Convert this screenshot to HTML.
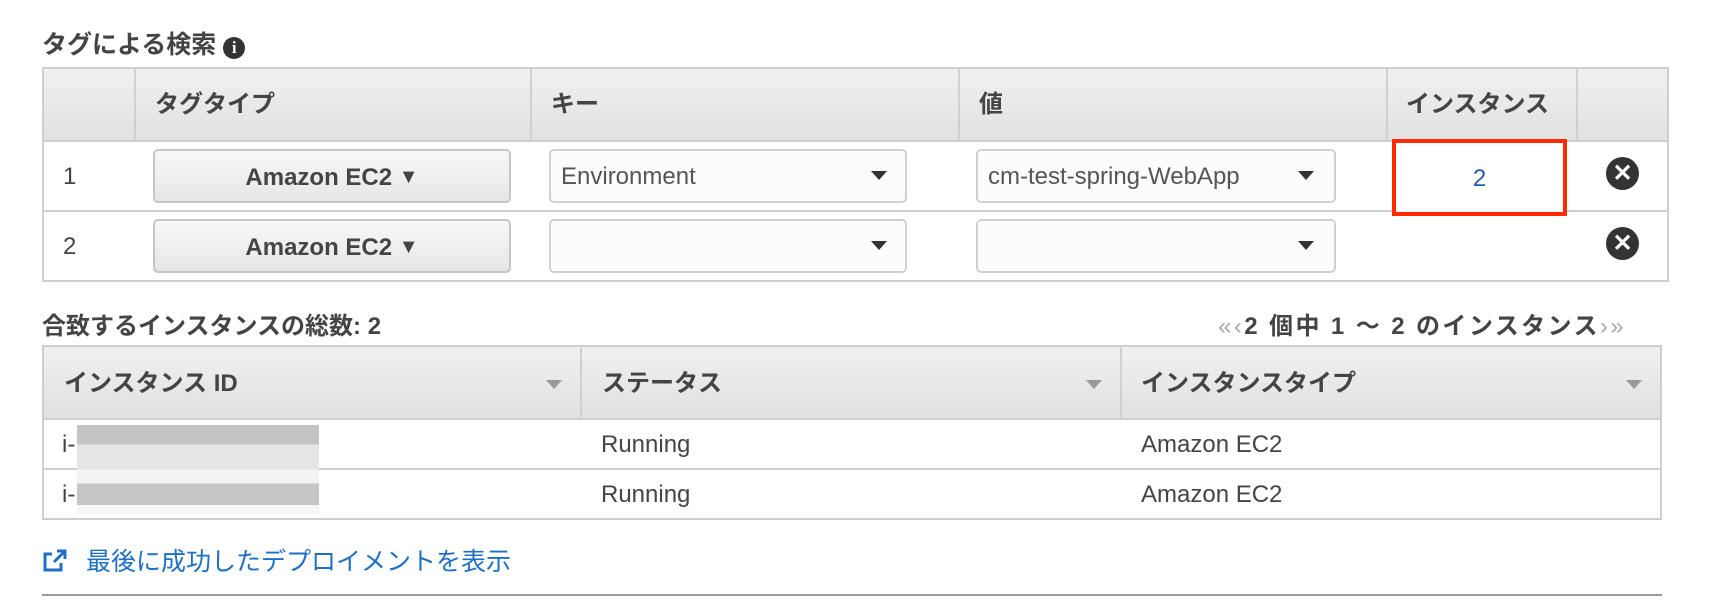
<!DOCTYPE html>
<html><head><meta charset="utf-8"><style>
body{margin:0;width:1732px;height:604px;background:#fff;position:relative;overflow:hidden;font-family:"Liberation Sans","Noto Sans CJK JP",sans-serif;color:#444}
.a{position:absolute}
.t{position:absolute;line-height:30px;font-size:24px;white-space:nowrap}
.b{font-weight:bold}
.hdr{background:linear-gradient(#f0f0f0,#e1e1e1)}
.vl{position:absolute;width:2px;background:#d0d0d0}
.hl{position:absolute;height:2px;background:#cfcfcf}
.btn{position:absolute;border:2px solid #c6c6c6;border-radius:5px;background:linear-gradient(#f8f8f8,#e6e6e6);box-sizing:border-box;font-weight:bold;font-size:24px;color:#444;text-align:center;line-height:52px}
.sel{position:absolute;border:2px solid #d0d0d0;border-radius:5px;background:#fcfcfc;box-sizing:border-box;font-size:24px;color:#555;line-height:52px;padding-left:10px}
.tri{position:absolute;width:0;height:0;border-left:8px solid transparent;border-right:8px solid transparent;border-top:9px solid #333}
.x{position:absolute;width:33px;height:33px;border-radius:50%;background:#333;color:#fff;font-weight:bold;font-size:24px;text-align:center;line-height:33px}
.st{position:absolute;width:0;height:0;border-left:8px solid transparent;border-right:8px solid transparent;border-top:9px solid #999}
</style></head><body>
<div class="t b" style="left:42px;top:30px;font-size:25px">タグによる検索 <span style="display:inline-block;width:22px;height:22px;border-radius:50%;background:#333;color:#fff;font-size:17px;line-height:22px;text-align:center;vertical-align:0px;font-family:'Liberation Serif',serif">i</span></div>

<div class="a" style="left:42px;top:67px;width:1627px;height:215px;border:2px solid #cfcfcf;box-sizing:border-box"></div>
<div class="a hdr" style="left:44px;top:69px;width:1623px;height:72px"></div>
<div class="hl" style="left:42px;top:140px;width:1627px"></div>
<div class="hl" style="left:42px;top:210px;width:1627px"></div>
<div class="vl" style="left:134px;top:67px;height:74px"></div>
<div class="vl" style="left:530px;top:67px;height:74px"></div>
<div class="vl" style="left:958px;top:67px;height:74px"></div>
<div class="vl" style="left:1386px;top:67px;height:74px"></div>
<div class="vl" style="left:1576px;top:67px;height:74px"></div>
<div class="t b" style="left:155px;top:90px">タグタイプ</div>
<div class="t b" style="left:551px;top:90px">キー</div>
<div class="t b" style="left:979px;top:90px">値</div>
<div class="t b" style="left:1406px;top:90px">インスタンス</div>

<div class="t" style="left:63px;top:162px">1</div>
<div class="t" style="left:63px;top:232px">2</div>
<div class="btn" style="left:153px;top:149px;width:358px;height:54px">Amazon EC2 <span style="font-size:20px;vertical-align:2px">▼</span></div>
<div class="btn" style="left:153px;top:219px;width:358px;height:54px">Amazon EC2 <span style="font-size:20px;vertical-align:2px">▼</span></div>
<div class="sel" style="left:549px;top:149px;width:358px;height:54px">Environment</div>
<div class="tri" style="left:871px;top:171px"></div>
<div class="sel" style="left:549px;top:219px;width:358px;height:54px"></div>
<div class="tri" style="left:871px;top:241px"></div>
<div class="sel" style="left:976px;top:149px;width:360px;height:54px">cm-test-spring-WebApp</div>
<div class="tri" style="left:1298px;top:171px"></div>
<div class="sel" style="left:976px;top:219px;width:360px;height:54px"></div>
<div class="tri" style="left:1298px;top:241px"></div>
<div class="a" style="left:1392px;top:139px;width:175px;height:77px;border:4px solid #ff2a00;box-sizing:border-box;background:#fff;text-align:center;line-height:71px;font-size:24px;color:#1f5fad">2</div>
<div class="x" style="left:1606px;top:157px">✕</div>
<div class="x" style="left:1606px;top:227px">✕</div>

<div class="t b" style="left:42px;top:312px">合致するインスタンスの総数: 2</div>
<div class="t b" style="right:106px;top:312px;text-align:right;letter-spacing:2.4px"><span style="color:#aaa;font-weight:normal">«‹</span>2 個中 1 〜 2 のインスタンス<span style="color:#aaa;font-weight:normal">›»</span></div>

<div class="a" style="left:42px;top:345px;width:1620px;height:175px;border:2px solid #cfcfcf;box-sizing:border-box"></div>
<div class="a hdr" style="left:44px;top:347px;width:1616px;height:71px"></div>
<div class="hl" style="left:42px;top:418px;width:1620px"></div>
<div class="hl" style="left:42px;top:468px;width:1620px"></div>
<div class="vl" style="left:580px;top:345px;height:74px"></div>
<div class="vl" style="left:1120px;top:345px;height:74px"></div>
<div class="t b" style="left:64px;top:369px">インスタンス ID</div>
<div class="t b" style="left:602px;top:369px">ステータス</div>
<div class="t b" style="left:1141px;top:369px">インスタンスタイプ</div>
<div class="st" style="left:546px;top:380px"></div>
<div class="st" style="left:1086px;top:380px"></div>
<div class="st" style="left:1626px;top:380px"></div>

<div class="t" style="left:62px;top:430px">i-</div>
<div class="t" style="left:62px;top:480px">i-</div>
<div class="a" style="left:77px;top:425px;width:242px;height:89px;background:linear-gradient(#c4c4c4 0,#c4c4c4 22%,#e6e6e6 22%,#e6e6e6 50%,#f2f2f2 50%,#f2f2f2 66%,#c6c6c6 66%,#c6c6c6 90%,#f6f6f6 90%)"></div>
<div class="t" style="left:601px;top:430px">Running</div>
<div class="t" style="left:601px;top:480px">Running</div>
<div class="t" style="left:1141px;top:430px">Amazon EC2</div>
<div class="t" style="left:1141px;top:480px">Amazon EC2</div>

<svg class="a" style="left:42px;top:549px" width="26" height="24" viewBox="0 0 26 24"><path d="M10 5H3v16h16v-7" fill="none" stroke="#1f6fc5" stroke-width="3"/><path d="M12 13L22 3M15 2h8v8" fill="none" stroke="#1f6fc5" stroke-width="3"/></svg>
<div class="t" style="left:86px;top:547px;font-size:25px;color:#1f6fc5">最後に成功したデプロイメントを表示</div>
<div class="a" style="left:42px;top:594px;width:1620px;height:2px;background:#9a9a9a"></div>
</body></html>
